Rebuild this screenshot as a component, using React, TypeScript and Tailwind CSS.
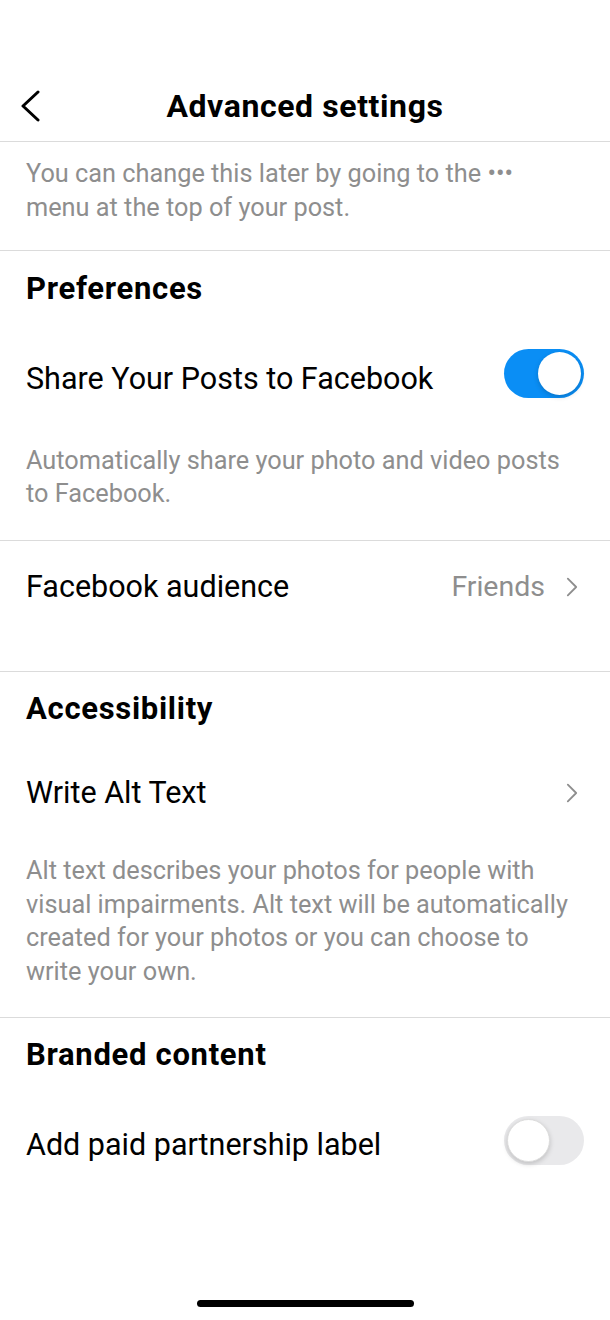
import { useState } from 'react'

function Toggle({ on, onClick }: { on: boolean; onClick: () => void }) {
  return (
    <button
      onClick={onClick}
      className={`relative h-[49px] w-[80px] shrink-0 rounded-full ${
        on ? 'bg-[#0a8ef5]' : 'bg-[#e9e9eb]'
      }`}
    >
      <span
        className={`absolute top-[3px] h-[43px] w-[43px] rounded-full bg-white shadow-[0_2px_5px_rgba(0,0,0,0.18)] ${
          on ? 'left-[34px]' : 'left-[3px] border border-[#dcdcdc]'
        }`}
      />
    </button>
  )
}

function Chevron({ className }: { className: string }) {
  return (
    <svg viewBox="0 0 14 24" className={className} fill="none">
      <path d="M2 2l10 10L2 22" stroke="currentColor" strokeWidth="2.2" strokeLinecap="round" strokeLinejoin="round" />
    </svg>
  )
}

export default function App() {
  const [shareFb, setShareFb] = useState(true)
  const [paid, setPaid] = useState(false)

  return (
    <div className="min-h-screen bg-white text-black font-['Roboto',_'Liberation_Sans',_sans-serif]">
      {/* status bar area */}
      <div className="h-[70px]" />

      {/* header */}
      <div className="relative flex h-[72px] items-center justify-center border-b border-[#dbdbdb]">
        <button className="absolute left-[20px] top-[20px] text-black">
          <svg viewBox="0 0 20 32" className="h-[32px] w-[20px]" fill="none">
            <path d="M18 2L3 16l15 14" stroke="currentColor" strokeWidth="3" strokeLinecap="round" strokeLinejoin="round" />
          </svg>
        </button>
        <h1 className="text-[32px] font-bold tracking-[0.6px]">Advanced settings</h1>
      </div>

      {/* note */}
      <div className="border-b border-[#dbdbdb] px-[26px] pt-[15px] pb-[25px]">
        <p className="text-[25.3px] leading-[34px] text-[#8e8e8e]">
          You can change this later by going to the •••
          <br />
          menu at the top of your post.
        </p>
      </div>

      {/* preferences */}
      <div className="border-b border-[#dbdbdb] px-[26px] pt-[21px] pb-[30px]">
        <h2 className="text-[31px] font-bold leading-[34px] tracking-[0.7px]">Preferences</h2>
        <div className="mt-[43px] flex items-start justify-between">
          <span className="mt-[13px] text-[30.5px] leading-[34px]">Share Your Posts to Facebook</span>
          <Toggle on={shareFb} onClick={() => setShareFb(!shareFb)} />
        </div>
        <p className="mt-[46px] text-[25.3px] leading-[33px] text-[#8e8e8e]">
          Automatically share your photo and video posts
          <br />
          to Facebook.
        </p>
      </div>

      {/* facebook audience */}
      <div className="border-b border-[#dbdbdb] px-[26px] pt-[29px] pb-[67px]">
        <div className="flex items-center justify-between">
          <span className="text-[30.5px] leading-[34px]">Facebook audience</span>
          <div className="flex items-center gap-[21px] pr-[6px]">
            <span className="text-[28.5px] leading-[34px] text-[#8e8e8e]">Friends</span>
            <Chevron className="h-[20px] w-[12px] text-[#8e8e8e]" />
          </div>
        </div>
      </div>

      {/* accessibility */}
      <div className="border-b border-[#dbdbdb] px-[26px] pt-[20px] pb-[29px]">
        <h2 className="text-[31px] font-bold leading-[34px] tracking-[0.7px]">Accessibility</h2>
        <div className="mt-[50px] flex items-center justify-between">
          <span className="text-[30.5px] leading-[34px]">Write Alt Text</span>
          <Chevron className="mr-[6px] h-[20px] w-[12px] text-[#8e8e8e]" />
        </div>
        <p className="mt-[44px] text-[25.3px] leading-[33.5px] text-[#8e8e8e]">
          Alt text describes your photos for people with
          <br />
          visual impairments. Alt text will be automatically
          <br />
          created for your photos or you can choose to
          <br />
          write your own.
        </p>
      </div>

      {/* branded content */}
      <div className="px-[26px] pt-[20px]">
        <h2 className="text-[31px] font-bold leading-[34px] tracking-[0.7px]">Branded content</h2>
        <div className="mt-[44px] flex items-start justify-between">
          <span className="mt-[12px] text-[30.5px] leading-[34px]">Add paid partnership label</span>
          <Toggle on={paid} onClick={() => setPaid(!paid)} />
        </div>
      </div>

      {/* home indicator */}
      <div className="mt-[135px] flex justify-center">
        <div className="h-[7px] w-[217px] rounded-full bg-black" />
      </div>
    </div>
  )
}
